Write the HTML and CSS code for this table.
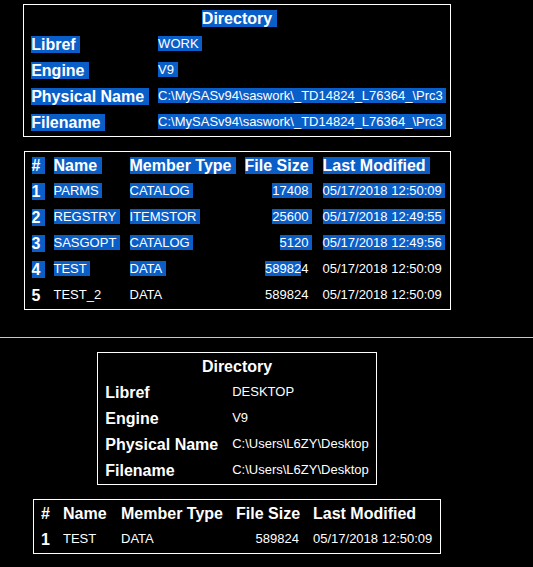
FILE: index.html
```html
<!DOCTYPE html>
<html lang="en">
<head>
<meta charset="utf-8">
<title>Directory listing</title>
<link rel="stylesheet" href="styles.css">
</head>
<body>
<main class="page">
  <section class="output">
    <table class="dir">
      <tr><th colspan="2" class="title"><span class="sel">Directory</span></th></tr>
      <tr><th><span class="sel">Libref</span></th><td><span class="sel">WORK</span></td></tr>
      <tr><th><span class="sel">Engine</span></th><td><span class="sel">V9</span></td></tr>
      <tr><th><span class="sel">Physical Name</span></th><td><span class="sel">C:\MySASv94\saswork\_TD14824_L76364_\Prc3</span></td></tr>
      <tr><th><span class="sel">Filename</span></th><td><span class="sel">C:\MySASv94\saswork\_TD14824_L76364_\Prc3</span></td></tr>
    </table>
    <table class="members members-work">
      <colgroup><col class="c-num"><col class="c-name"><col class="c-type"><col class="c-size"><col class="c-date"></colgroup>
      <tr><th><span class="sel">#</span></th><th><span class="sel">Name</span></th><th><span class="sel">Member Type</span></th><th><span class="sel">File Size</span></th><th><span class="sel">Last Modified</span></th></tr>
      <tr><th><span class="sel">1</span></th><td><span class="sel">PARMS</span></td><td><span class="sel">CATALOG</span></td><td class="num"><span class="sel">17408</span></td><td><span class="sel">05/17/2018 12:50:09</span></td></tr>
      <tr><th><span class="sel">2</span></th><td><span class="sel">REGSTRY</span></td><td><span class="sel">ITEMSTOR</span></td><td class="num"><span class="sel">25600</span></td><td><span class="sel">05/17/2018 12:49:55</span></td></tr>
      <tr><th><span class="sel">3</span></th><td><span class="sel">SASGOPT</span></td><td><span class="sel">CATALOG</span></td><td class="num"><span class="sel">5120</span></td><td><span class="sel">05/17/2018 12:49:56</span></td></tr>
      <tr><th><span class="sel">4</span></th><td><span class="sel">TEST</span></td><td><span class="sel">DATA</span></td><td class="num"><span class="sel sel-end">58982</span>4</td><td>05/17/2018 12:50:09</td></tr>
      <tr><th>5</th><td>TEST_2</td><td>DATA</td><td class="num">589824</td><td>05/17/2018 12:50:09</td></tr>
    </table>
  </section>
  <hr class="sep">
  <section class="output">
    <table class="dir">
      <tr><th colspan="2" class="title">Directory</th></tr>
      <tr><th>Libref</th><td>DESKTOP</td></tr>
      <tr><th>Engine</th><td>V9</td></tr>
      <tr><th>Physical Name</th><td>C:\Users\L6ZY\Desktop</td></tr>
      <tr><th>Filename</th><td>C:\Users\L6ZY\Desktop</td></tr>
    </table>
    <table class="members members-desktop">
      <colgroup><col class="c-num"><col class="c-name"><col class="c-type"><col class="c-size"><col class="c-date"></colgroup>
      <tr><th>#</th><th>Name</th><th>Member Type</th><th>File Size</th><th>Last Modified</th></tr>
      <tr><th>1</th><td>TEST</td><td>DATA</td><td class="num">589824</td><td>05/17/2018 12:50:09</td></tr>
    </table>
  </section>
</main>
</body>
</html>
```

FILE: styles.css
```css
html, body {
  margin: 0;
  padding: 0;
  background: #000;
}

body {
  font-family: "Liberation Sans", Arial, sans-serif;
  color: #fff;
}

.page {
  width: 533px;
}

.output {
  width: 474px;
}

.output:first-child {
  padding-top: 4px;
}

table {
  border: 1px solid #fff;
  border-collapse: separate;
  border-spacing: 0;
  padding: 1px 0 0 0;
  margin: 0 auto;
  box-sizing: border-box;
}

table + table {
  margin-top: 14px;
}

th, td {
  padding: 4px 7px;
  vertical-align: top;
  text-align: left;
  white-space: nowrap;
}

th {
  font-size: 16px;
  line-height: 18px;
  font-weight: bold;
}

td {
  font-size: 13px;
  line-height: 15px;
}

.title {
  text-align: center;
}

.num {
  text-align: right;
}

.members {
  table-layout: fixed;
}

.members-work {
  width: 427px;
}

.members-desktop {
  width: 408px;
}

.c-num { width: 22px; }
.c-type { width: 115px; }
.c-date { width: 134px; }

.members-work .c-name { width: 76px; }
.members-work .c-size { width: 78px; }

.members-desktop .c-name { width: 58px; }
.members-desktop .c-size { width: 77px; }

.sel {
  background: #0a5ec8;
  padding-right: 0.28em;
  margin-right: -0.28em;
}

.sel-end {
  padding-right: 0;
  margin-right: 0;
}

.sep {
  border: 0;
  border-top: 1px solid #c8c8c8;
  height: 0;
  margin: 27px 0 14px 0;
}
```
